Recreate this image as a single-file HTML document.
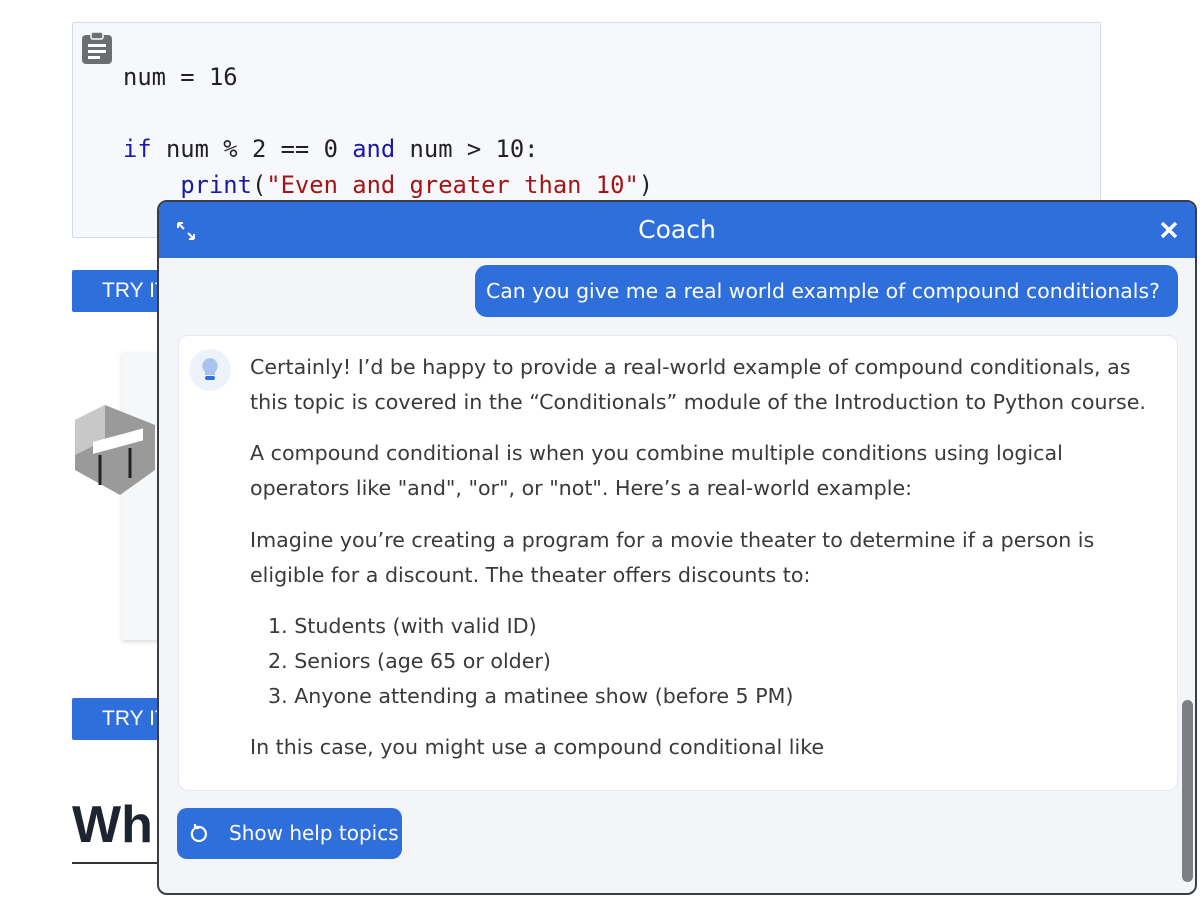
<!DOCTYPE html>
<html><head><meta charset="utf-8"><style>
body{margin:0;width:1200px;height:897px;background:#fff;position:relative;overflow:hidden;font-family:"Liberation Sans",sans-serif}
.code{position:absolute;left:72px;top:22px;width:1027px;height:214px;background:#f7f8fb;border:1px solid #d3dbe8;border-radius:2px}
.code pre{position:absolute;left:50px;top:36px;margin:0;font:23.8px/36px "DejaVu Sans Mono","Liberation Mono",monospace;color:#222}
.kw{color:#1a1aa6}.st{color:#a31515}
.try{position:absolute;left:72px;width:120px;height:42px;background:#2f6fdb;color:#fff;font-size:21px;line-height:42px;padding-left:30px;box-sizing:border-box;border-radius:2px}
.panel{position:absolute;left:157px;top:200px;width:1040px;height:695px;background:#f3f5f9;border:2px solid #3a3f47;border-radius:10px;box-sizing:border-box;overflow:hidden}
.hdr{height:56px;background:#2f6fdb;color:#fff;text-align:center;font-size:25px;line-height:56px;font-family:"DejaVu Sans",sans-serif}
.user{position:absolute;left:316px;top:63px;width:703px;height:52px;background:#2f6fdb;color:#fff;border-radius:12px;font-size:20.4px;line-height:52px;padding-left:11px;box-sizing:border-box;font-family:"DejaVu Sans",sans-serif;white-space:nowrap}
.msg{position:absolute;left:19px;top:133px;width:1000px;height:456px;background:#fff;border:1px solid #e6e9ef;border-radius:10px;box-sizing:border-box;color:#3a3a3a;font-size:20.6px;line-height:35px;font-family:"DejaVu Sans",sans-serif}
.msg p{margin:0;position:absolute;left:71px;white-space:nowrap}
.btn{position:absolute;left:18px;top:606px;width:225px;height:51px;background:#2f6fdb;border-radius:10px;color:#fff;font-size:20px;line-height:51px;padding-left:52px;box-sizing:border-box;font-family:"DejaVu Sans",sans-serif;white-space:nowrap}
</style></head><body>
<div class="code">
<svg style="position:absolute;left:8px;top:8px" width="32" height="34" viewBox="0 0 32 34"><rect x="1" y="4" width="30" height="29" rx="4" fill="#6b6e73"/><rect x="10" y="1" width="12" height="7" rx="2" fill="#6b6e73" stroke="#f7f8fb" stroke-width="1.5"/><rect x="7" y="13" width="18" height="3" fill="#fff"/><rect x="7" y="19" width="18" height="3" fill="#fff"/><rect x="7" y="25" width="12" height="3" fill="#fff"/></svg>
<pre>num = 16

<span class="kw">if</span> num % 2 == 0 <span class="kw">and</span> num &gt; 10:
    <span class="kw">print</span>(<span class="st">"Even and greater than 10"</span>)</pre>
</div>
<div class="try" style="top:270px">TRY IT</div>
<div class="try" style="top:698px">TRY IT</div>
<div style="position:absolute;left:122px;top:352px;width:60px;height:288px;background:#f6f7f8;box-shadow:0 2px 4px #ddd"></div>
<svg style="position:absolute;left:55px;top:400px" width="110" height="100"><polygon points="20,20 50,5 100,25 100,70 65,95 20,70" fill="#9a9a9a"/><polygon points="20,20 50,5 50,40 20,55" fill="#c8c8c8"/><rect x="38" y="37" width="50" height="12" fill="#fff" transform="skewY(-15) translate(0,15)"/><line x1="45" y1="55" x2="45" y2="85" stroke="#222" stroke-width="3"/><line x1="75" y1="48" x2="75" y2="78" stroke="#222" stroke-width="3"/></svg>
<div style="position:absolute;left:72px;top:795px;font-size:52px;font-weight:bold;color:#1d2430">Wh</div>
<div style="position:absolute;left:72px;top:862px;width:100px;height:2px;background:#333"></div>
<div class="panel">
<div class="hdr">Coach</div>
<svg style="position:absolute;left:16px;top:18px" width="22" height="22" viewBox="0 0 22 22" stroke="#fff" stroke-width="2" fill="none"><path d="M3 3l6 6M3 3h5M3 3v5M19 19l-6-6M19 19h-5M19 19v-5"/></svg>
<svg style="position:absolute;left:1000px;top:18px" width="20" height="20" viewBox="0 0 20 20" stroke="#fff" stroke-width="3.5"><path d="M3 3l14 14M17 3L3 17"/></svg>
<div class="user">Can you give me a real world example of compound conditionals?</div>
<div class="msg">
<svg style="position:absolute;left:9px;top:12px" width="44" height="44"><circle cx="22" cy="22" r="21" fill="#eef3fb"/><path d="M22 10a8 8 0 0 0-5 14v3h10v-3a8 8 0 0 0-5-14z" fill="#a8c4ee"/><rect x="17" y="28" width="10" height="4" rx="2" fill="#2f6fdb"/></svg>
<p style="top:14px">Certainly! I’d be happy to provide a real-world example of compound conditionals, as<br>this topic is covered in the “Conditionals” module of the Introduction to Python course.</p>
<p style="top:100px">A compound conditional is when you combine multiple conditions using logical<br>operators like "and", "or", or "not". Here’s a real-world example:</p>
<p style="top:187px">Imagine you’re creating a program for a movie theater to determine if a person is<br>eligible for a discount. The theater offers discounts to:</p>
<p style="top:273px;left:89px">1. Students (with valid ID)<br>2. Seniors (age 65 or older)<br>3. Anyone attending a matinee show (before 5 PM)</p>
<p style="top:394px">In this case, you might use a compound conditional like</p>
</div>
<div class="btn"><svg style="position:absolute;left:12px;top:15px" width="20" height="20" viewBox="0 0 20 20" fill="none" stroke="#fff" stroke-width="2.2"><path d="M5 6a7 7 0 1 0 5-2H6M6 1v4h4"/></svg>Show help topics</div>
<div style="position:absolute;left:1023px;top:498px;width:11px;height:182px;background:#7b7f86;border-radius:6px"></div>
</div>
</body></html>
